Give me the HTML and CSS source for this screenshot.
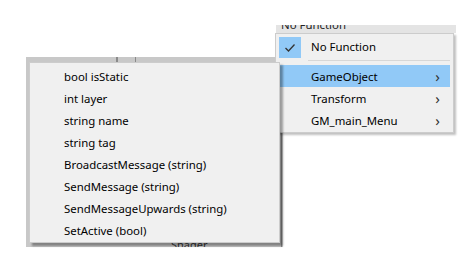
FILE: index.html
```html
<!DOCTYPE html>
<html lang="en">
<head>
  <meta charset="UTF-8">
  <title>Function menu</title>
  <link rel="stylesheet" href="styles.css">
</head>
<body>
  <div class="screen">
    <!-- inspector panel behind the popups -->
    <div class="field"><span class="field-text">No Function</span></div>
    <div class="inspector">
      <span class="tick tick-a"></span>
      <span class="tick tick-b"></span>
      <span class="edge"></span>
      <span class="shader">Shader</span>
    </div>

    <!-- main popup -->
    <div class="menu menu-main">
      <div class="item checked">
        <span class="check">
          <svg width="12" height="10" viewBox="0 0 12 10"><path d="M1.5 5 L4.5 8 L10.5 1.5" fill="none" stroke="#333" stroke-width="1.3"/></svg>
        </span>
        <span class="label">No Function</span>
      </div>
      <div class="sep"></div>
      <div class="item active"><span class="label">GameObject</span><span class="arrow">›</span></div>
      <div class="item"><span class="label">Transform</span><span class="arrow">›</span></div>
      <div class="item"><span class="label">GM_main_Menu</span><span class="arrow">›</span></div>
    </div>

    <!-- submenu -->
    <div class="menu menu-sub">
      <div class="item"><span class="label">bool isStatic</span></div>
      <div class="item"><span class="label">int layer</span></div>
      <div class="item"><span class="label">string name</span></div>
      <div class="item"><span class="label">string tag</span></div>
      <div class="item"><span class="label">BroadcastMessage (string)</span></div>
      <div class="item"><span class="label">SendMessage (string)</span></div>
      <div class="item"><span class="label">SendMessageUpwards (string)</span></div>
      <div class="item"><span class="label">SetActive (bool)</span></div>
    </div>
  </div>
</body>
</html>
```

FILE: styles.css
```css
body {
  margin: 0;
  padding: 0;
  background: #ffffff;
  font-family: 'Noto Sans', 'Noto Sans CJK KR', sans-serif;
  font-size: 11.4px;
  color: #000;
}

.screen {
  position: relative;
  width: 475px;
  height: 268px;
  overflow: hidden;
}

.field {
  position: absolute;
  left: 276px;
  top: 25px;
  width: 180px;
  height: 8px;
  background: #e4e4e4;
  color: #222;
  padding-left: 5px;
  box-sizing: border-box;
  overflow: hidden;
}

.field-text {
  display: block;
  line-height: 14px;
  margin-top: -7px;
}

.inspector {
  position: absolute;
  left: 26px;
  top: 57px;
  width: 257px;
  height: 190px;
  background: #c8c8c8;
  overflow: hidden;
}

.tick {
  position: absolute;
  top: 0;
  width: 2px;
  height: 5px;
  background: #8a8a8a;
}

.tick-a { left: 90px; }
.tick-b { left: 109px; width: 1px; }

.edge {
  position: absolute;
  right: 1px;
  top: 0;
  width: 1px;
  height: 100%;
  background: #8c8c8c;
}

.shader {
  position: absolute;
  left: 145px;
  top: 180px;
  color: #333;
  font-size: 11px;
}

.menu {
  position: absolute;
  background: #f0f0f0;
  border: 1px solid #cccccc;
  box-sizing: border-box;
}

.menu-main {
  left: 275px;
  top: 33px;
  width: 179px;
  height: 100px;
  padding: 1px 3px 2px;
  box-shadow: 2px 2px 2px rgba(0, 0, 0, 0.25);
}

.menu-sub {
  left: 29px;
  top: 62px;
  width: 251px;
  height: 181px;
  padding: 2px 3px;
  box-shadow: 3px 3px 2px rgba(0, 0, 0, 0.35);
  z-index: 2;
}

.item {
  position: relative;
  display: flex;
  align-items: center;
  height: 22px;
}

.menu-main .item .label {
  padding-left: 32px;
}

.menu-sub .item .label {
  padding-left: 31px;
}

.item.active {
  background: #91c9f7;
}

.check {
  position: absolute;
  left: 0;
  top: 2px;
  width: 22px;
  height: 21px;
  background: #91c9f7;
  display: flex;
  align-items: center;
  justify-content: center;
}

.arrow {
  margin-left: auto;
  margin-right: 10px;
  font-size: 15px;
  line-height: 15px;
  color: #333;
}

.sep {
  height: 1px;
  background: #d7d7d7;
  margin: 3px 0 4px 29px;
}
```
